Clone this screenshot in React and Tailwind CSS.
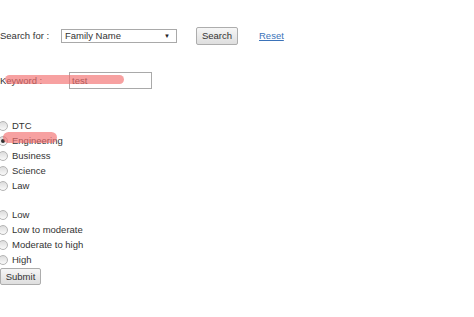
import { useState } from 'react';

const fields = ['DTC', 'Engineering', 'Business', 'Science', 'Law'];
const levels = ['Low', 'Low to moderate', 'Moderate to high', 'High'];

function Radio({ label, checked }) {
  return (
    <label className="flex items-center h-[15px]">
      <span className="ml-[-2px] w-[10px] h-[10px] rounded-full border border-[#b4b4b4] bg-gradient-to-b from-[#dcdcdc] to-[#fafafa] flex items-center justify-center shrink-0">
        {checked && <span className="w-[4px] h-[4px] rounded-full bg-[#333]" />}
      </span>
      <span className="ml-[4px]">{label}</span>
    </label>
  );
}

export default function App() {
  const [field] = useState('Engineering');

  return (
    <div
      className="relative w-[474px] h-[317px] bg-white text-[#333] text-[9.5px] leading-none overflow-hidden"
      style={{ fontFamily: '"Liberation Sans", Arial, sans-serif' }}
    >
      <div className="pt-[27px] flex items-center h-[45px]">
        <span className="w-[61px]">Search for :</span>
        <div className="w-[116px] h-[14px] border border-[#a9a9a9] flex items-center justify-between pl-[3px] pr-[6px]">
          <span>Family Name</span>
          <span className="text-[6px] text-[#222]">▼</span>
        </div>
        <button className="ml-[19px] w-[42px] h-[18px] border border-[#adadad] rounded-[2px] bg-gradient-to-b from-[#f6f6f6] to-[#dedede] text-[#333]">
          Search
        </button>
        <a className="ml-[21px] text-[#3b73b9] underline">Reset</a>
      </div>

      <div className="mt-[27px] flex items-center h-[17px]">
        <span className="w-[69px]">Keyword :</span>
        <div className="w-[83px] h-[17px] border border-[#a9a9a9] flex items-center pl-[2px]">test</div>
      </div>

      <div className="mt-[29px] flex flex-col">
        {fields.map((f) => (
          <Radio key={f} label={f} checked={f === field} />
        ))}
      </div>

      <div className="mt-[14px] flex flex-col">
        {levels.map((l) => (
          <Radio key={l} label={l} />
        ))}
      </div>

      <button className="mt-[1px] w-[41px] h-[17px] border border-[#adadad] rounded-[2px] bg-gradient-to-b from-[#f6f6f6] to-[#dedede] text-[#333]">
        Submit
      </button>

      <div className="absolute left-[5px] top-[75px] w-[119px] h-[9px] rounded-full bg-[#f26f6f]/65" />
      <div className="absolute left-[3px] top-[132px] w-[54px] h-[11px] rounded-full bg-[#f26f6f]/65" />
    </div>
  );
}
